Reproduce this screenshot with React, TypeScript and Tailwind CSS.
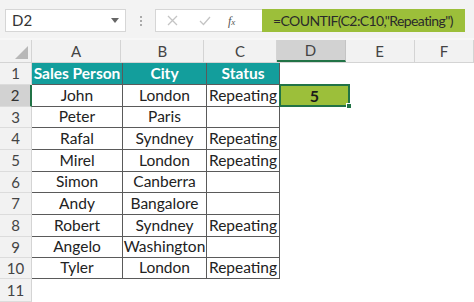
import React from "react";

const cols = [91, 84, 73, 70, 70, 60];
const colLetters = ["A", "B", "C", "D", "E", "F"];
const rowHeights = [22, 22, 21, 22, 22, 21, 22, 22, 21, 21, 23];

const data: [string, string, string][] = [
  ["John", "London", "Repeating"],
  ["Peter", "Paris", ""],
  ["Rafal", "Syndney", "Repeating"],
  ["Mirel", "London", "Repeating"],
  ["Simon", "Canberra", ""],
  ["Andy", "Bangalore", ""],
  ["Robert", "Syndney", "Repeating"],
  ["Angelo", "Washington", ""],
  ["Tyler", "London", "Repeating"],
];

const font = { fontFamily: "Lato, 'Open Sans', sans-serif" };

export default function App() {
  return (
    <div className="w-[474px] h-[302px] overflow-hidden bg-white relative" style={font}>
      {/* formula bar */}
      <div className="h-[38px] bg-[#f3f3f3] flex items-start pt-[9px] pl-[5px]">
        <div className="w-[121px] h-[23px] bg-white border border-[#d6d6d6] flex items-center justify-between pl-[6px] pr-[6px]">
          <span className="text-[15px] text-[#333]">D2</span>
          <svg width="8" height="5" viewBox="0 0 8 5"><path d="M0 0 L8 0 L4 5 Z" fill="#666" /></svg>
        </div>
        <div className="w-[29px] h-[23px] flex flex-col items-center justify-center gap-[2px]">
          <div className="w-[2px] h-[2px] bg-[#aaa]" />
          <div className="w-[2px] h-[2px] bg-[#aaa]" />
          <div className="w-[2px] h-[2px] bg-[#aaa]" />
        </div>
        <div className="w-[107px] h-[23px] bg-white border border-[#d6d6d6] border-r-0 flex items-center">
          <svg className="ml-[11px]" width="11" height="11" viewBox="0 0 11 11"><path d="M1 1 L10 10 M10 1 L1 10" stroke="#c4c4c4" strokeWidth="1.3" /></svg>
          <svg className="ml-[21px]" width="12" height="10" viewBox="0 0 12 10"><path d="M1 5 L4.5 8.5 L11 1" stroke="#c4c4c4" strokeWidth="1.3" fill="none" /></svg>
          <span className="ml-[17px] text-[12px] italic text-[#555]" style={{ fontFamily: "'Liberation Serif', serif" }}>f<span className="text-[9px]">x</span></span>
        </div>
        <div className="w-[203px] h-[23px] bg-[#9cbf3a] flex items-center pl-[11px]">
          <span className="text-[14px] tracking-[-0.6px] text-[#2a2a2a] whitespace-nowrap">=COUNTIF(C2:C10,"Repeating")</span>
        </div>
      </div>
      <div className="h-[2px] bg-[#f7f7f7]" />
      {/* column header */}
      <div className="flex h-[23px] bg-[#f2f2f2] border-b border-[#d4d4d4]">
        <div className="w-[32px] h-full relative border-r border-[#d4d4d4]">
          <svg className="absolute right-[3px] bottom-[3px]" width="13" height="13" viewBox="0 0 13 13"><path d="M13 0 L13 13 L0 13 Z" fill="#b8b8b8" /></svg>
        </div>
        {colLetters.map((c, i) => (
          <div
            key={c}
            className={`h-full flex items-center justify-center text-[15px] border-r ${
              i === 3 ? "bg-[#d2d2d2] text-[#444] border-[#c4c4c4] border-b-2 border-b-[#217346]" : "text-[#444] border-[#d4d4d4]"
            }`}
            style={{ width: cols[i] }}
          >
            {c}
          </div>
        ))}
      </div>
      {/* rows */}
      {rowHeights.map((h, r) => {
        const rowNum = r + 1;
        const isHeader = r === 0;
        const d = r >= 1 && r <= 9 ? data[r - 1] : null;
        const inTable = r <= 9;
        return (
          <div key={r} className="flex" style={{ height: h }}>
            <div
              className={`w-[32px] h-full flex items-center justify-center text-[15px] border-b border-[#dcdcdc] ${
                rowNum === 2 ? "bg-[#d2d2d2] border-r-2 border-r-[#217346] text-[#333]" : "bg-[#f2f2f2] border-r border-r-[#d4d4d4] text-[#444]"
              }`}
            >
              {rowNum}
            </div>
            {[0, 1, 2].map((c) => {
              const text = isHeader ? ["Sales Person", "City", "Status"][c] : d ? d[c] : "";
              return (
                <div
                  key={c}
                  className={`h-full flex items-center justify-center text-[15.5px] whitespace-nowrap ${
                    inTable ? "border-r border-b border-[#5a5a5a]" : ""
                  } ${isHeader ? "bg-[#139e9c] text-white font-bold" : "text-[#222]"}`}
                  style={{ width: cols[c] }}
                >
                  {text}
                </div>
              );
            })}
            <div className="h-full relative" style={{ width: cols[3] }}>
              {rowNum === 2 && (
                <div className="absolute left-[-1px] top-[-1px] w-[71px] h-[23px] border-2 border-[#217346] bg-[#9cbf3a] flex items-center justify-center">
                  <span className="text-[16px] font-bold text-[#1a1a1a]">5</span>
                  <div className="absolute right-[-4px] bottom-[-4px] w-[6px] h-[6px] bg-[#217346] border border-white" />
                </div>
              )}
            </div>
          </div>
        );
      })}
    </div>
  );
}
